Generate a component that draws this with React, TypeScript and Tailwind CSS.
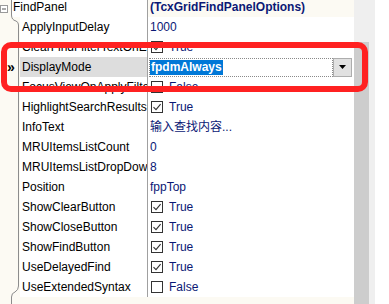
import React from 'react';

type Row = {
  name: string;
  value?: string;
  check?: boolean;
  kind?: 'text' | 'check' | 'edit';
};

const rows: Row[] = [
  { name: 'ApplyInputDelay', value: '1000' },
  { name: 'ClearFindFilterTextOnEsc', value: 'True', check: true, kind: 'check' },
  { name: 'DisplayMode', value: 'fpdmAlways', kind: 'edit' },
  { name: 'FocusViewOnApplyFilter', value: 'False', check: false, kind: 'check' },
  { name: 'HighlightSearchResults', value: 'True', check: true, kind: 'check' },
  { name: 'InfoText', value: '输入查找内容...' },
  { name: 'MRUItemsListCount', value: '0' },
  { name: 'MRUItemsListDropDownCount', value: '8' },
  { name: 'Position', value: 'fppTop' },
  { name: 'ShowClearButton', value: 'True', check: true, kind: 'check' },
  { name: 'ShowCloseButton', value: 'True', check: true, kind: 'check' },
  { name: 'ShowFindButton', value: 'True', check: true, kind: 'check' },
  { name: 'UseDelayedFind', value: 'True', check: true, kind: 'check' },
  { name: 'UseExtendedSyntax', value: 'False', check: false, kind: 'check' },
];

const CheckBox = ({ checked }: { checked?: boolean }) => (
  <span className="flex h-[12px] w-[12px] shrink-0 items-center justify-center border border-[#333333] bg-white">
    {checked && (
      <svg width="10" height="10" viewBox="0 0 10 10">
        <path d="M1.5 5.2 L4 7.6 L8.6 2.2" fill="none" stroke="#333333" strokeWidth="1.1" />
      </svg>
    )}
  </span>
);

const ValueCell = ({ row }: { row: Row }) => {
  if (row.kind === 'edit') {
    return (
      <div className="flex h-[19px] w-full items-center pl-[1px]">
        <div className="flex h-full flex-1 items-center border border-dotted border-[#8a8a8a]">
          <span className="bg-[#0078d7] px-[1px] font-bold leading-[15px] text-white">{row.value}</span>
        </div>
        <div className="flex h-full w-[19px] items-center justify-center border border-[#adadad] bg-[#e1e1e1]">
          <svg width="8" height="5" viewBox="0 0 8 5">
            <path d="M0 0 H7 L3.5 4 Z" fill="#000" />
          </svg>
        </div>
        <div className="w-[2px]" />
      </div>
    );
  }
  if (row.kind === 'check') {
    return (
      <div className="flex items-center gap-[6px] pl-[3px]">
        <CheckBox checked={row.check} />
        <span className="text-[#0a1875]">{row.value}</span>
      </div>
    );
  }
  return <span className="pl-[2px] text-[#0a1875]">{row.value}</span>;
};

export default function App() {
  return (
    <div
      className="relative h-[304px] w-[389px] overflow-hidden bg-white text-[12px] text-black"
      style={{ fontFamily: '"Liberation Sans", "Noto Sans CJK SC", sans-serif' }}
    >
      <div className="flex h-full">
        <div className="relative flex h-full w-[354px] bg-[#fcfaf3]">
          <svg className="absolute left-0 top-0" width="24" height="304" viewBox="0 0 24 304">
            <rect x="0.5" y="5.5" width="7" height="7" fill="#fff" stroke="#9a9a9a" />
            <path d="M2 9 H6" stroke="#555" />
            <path d="M11.5 0 V15 Q11.5 20 16 21 Q18.5 22 18.5 25 V286 Q18.5 290 15 292 Q11.5 293 11.5 297 V304" fill="none" stroke="#8c8c8c" />
          </svg>
          <div className="ml-[12px] -mt-[3px] flex flex-1 flex-col">
            <div className="flex h-[20px] items-center">
              <div className="flex h-full w-[136px] items-center border-r border-[#a0a0a0] bg-white pl-[1px]">
                FindPanel
              </div>
              <div className="flex h-full flex-1 items-center pl-[2px] font-bold text-[#0a1875]">
                (TcxGridFindPanelOptions)
              </div>
            </div>
            {rows.map((row) => (
              <div key={row.name} className="flex h-[20px] items-center">
                <div className="w-[8px] self-stretch" />
                <div
                  className={`flex h-full w-[128px] items-center overflow-hidden whitespace-nowrap border-r border-[#a0a0a0] pl-[2px] ${
                    row.kind === 'edit' ? 'bg-[#dddddd]' : 'bg-white'
                  }`}
                >
                  {row.name}
                </div>
                <div className="flex h-full flex-1 items-center whitespace-nowrap bg-white">
                  <ValueCell row={row} />
                </div>
              </div>
            ))}
          </div>
        </div>
        <div className="flex h-full w-[21px] bg-[#efefef]">
          <div className="mt-[42px] w-[15px] bg-[#cdcdcd]" />
        </div>
      </div>
      <div className="absolute left-[1px] top-[42px] h-[50px] w-[367px] rounded-[10px] border-[6px] border-[#ff2121]" />
      <span className="absolute left-[7px] top-[59px] text-[14px] font-bold leading-[16px]">»</span>
    </div>
  );
}
